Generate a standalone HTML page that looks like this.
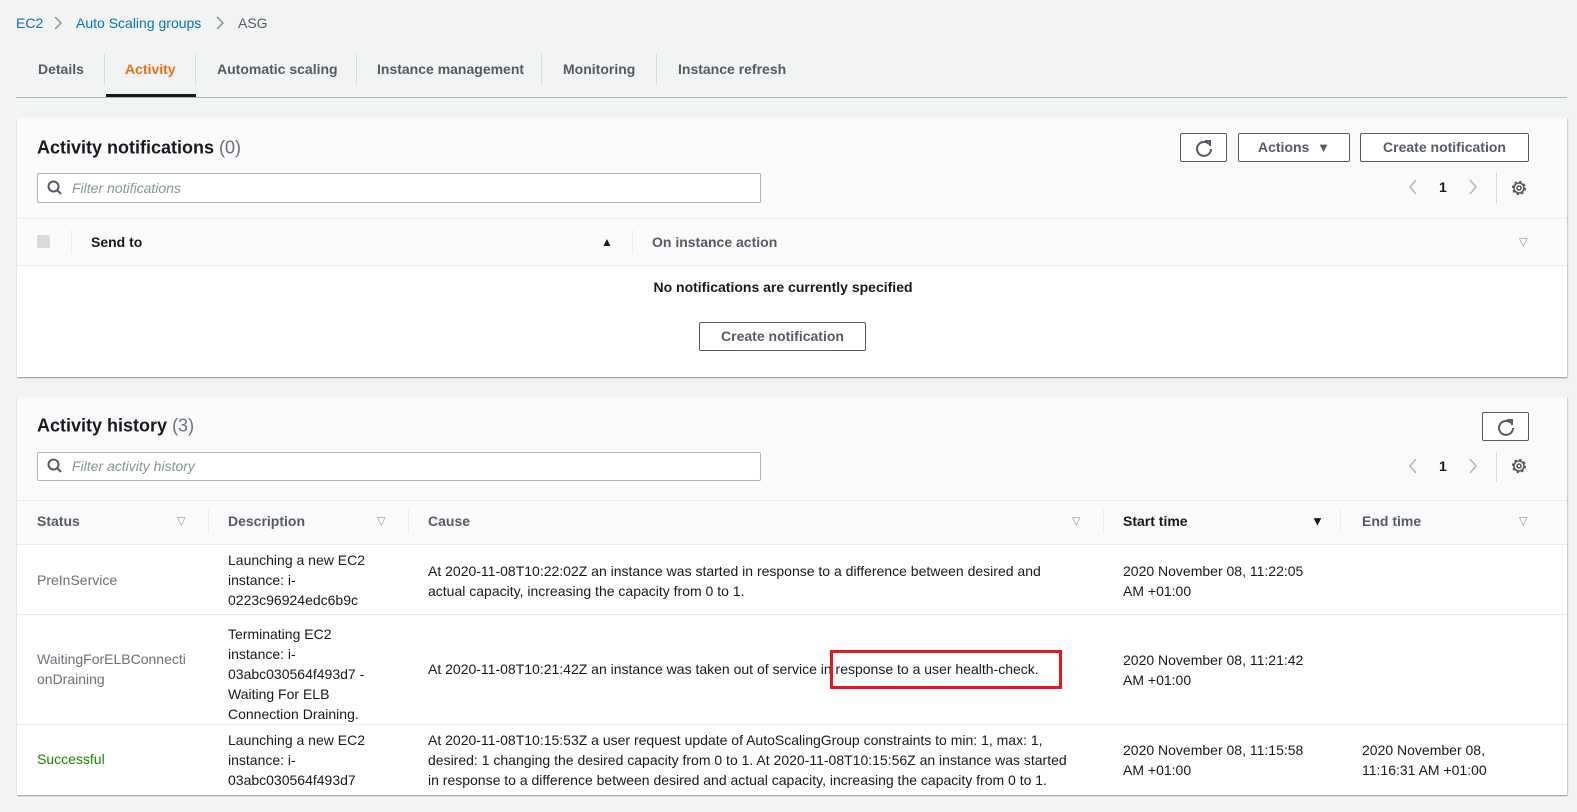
<!DOCTYPE html>
<html><head><meta charset="utf-8"><style>
*{margin:0;padding:0;box-sizing:border-box}
body{width:1577px;height:812px;background:#f2f3f3;font-family:"Liberation Sans",sans-serif;font-size:14px;color:#16191f;position:relative;overflow:hidden}
.a{position:absolute;white-space:nowrap}
.c{transform:translateY(-50%)}
.link{color:#0073bb}
.tab{font-weight:bold;color:#545b64;font-size:14px}
.sep{position:absolute;width:1px;background:#d5dbdb}
.panel{position:absolute;left:17px;width:1550px;background:#fff;box-shadow:0 1px 1px rgba(0,28,36,.3),1px 1px 1px rgba(0,28,36,.15)}
.btn{position:absolute;border:1px solid #545b64;border-radius:2px;background:#fff;font-weight:bold;color:#545b64;text-align:center;font-size:14px}
.inp{position:absolute;border:1px solid #aab7b8;border-radius:2px;background:#fff}
.ph{font-style:italic;color:#879596}
.h{font-weight:bold}
.tri{color:#879596;font-size:11px}
.lh{line-height:20px}
</style></head><body>
<div class="a c link" style="left:16px;top:23px">EC2</div>
<svg class="a" style="left:53px;top:16px" width="10" height="14"><path d="M2 1 L8 7 L2 13" fill="none" stroke="#879596" stroke-width="1.5"/></svg>
<div class="a c link" style="left:76px;top:23px">Auto Scaling groups</div>
<svg class="a" style="left:215px;top:16px" width="10" height="14"><path d="M2 1 L8 7 L2 13" fill="none" stroke="#879596" stroke-width="1.5"/></svg>
<div class="a c" style="left:238px;top:23px;color:#545b64">ASG</div>

<div class="a c tab" style="left:38px;top:69px">Details</div>
<div class="sep" style="left:104px;top:54px;height:30px"></div>
<div class="a c tab" style="left:125px;top:69px;color:#ec7211">Activity</div>
<div class="sep" style="left:195px;top:54px;height:30px"></div>
<div class="a c tab" style="left:217px;top:69px">Automatic scaling</div>
<div class="sep" style="left:356px;top:54px;height:30px"></div>
<div class="a c tab" style="left:377px;top:69px">Instance management</div>
<div class="sep" style="left:541px;top:54px;height:30px"></div>
<div class="a c tab" style="left:563px;top:69px">Monitoring</div>
<div class="sep" style="left:656px;top:54px;height:30px"></div>
<div class="a c tab" style="left:678px;top:69px">Instance refresh</div>
<div class="a" style="left:16px;top:97px;width:1551px;height:1px;background:#aab7b8"></div>
<div class="a" style="left:106px;top:94px;width:90px;height:3px;background:#16191f"></div>

<!-- panel 1 -->
<div class="panel" style="top:118px;height:259px">
 <div class="a" style="left:0;top:0;width:1550px;height:100px;background:#fafafa"></div>
 <div class="a c" style="left:20px;top:30px;font-size:18px"><b>Activity notifications</b> <span style="color:#687078">(0)</span></div>
 <div class="btn" style="left:1163px;top:15px;width:47px;height:29px"><svg width="20" height="20" style="margin-top:4px" viewBox="0 0 20 20"><path d="M15 6 A7 7 0 1 0 17 11" fill="none" stroke="#545b64" stroke-width="2"/><path d="M11 3 L16 3 L16 8" fill="none" stroke="#545b64" stroke-width="2"/></svg></div>
 <div class="btn" style="left:1221px;top:15px;width:112px;height:29px;line-height:27px">Actions &nbsp;<span style="font-size:13px">▼</span></div>
 <div class="btn" style="left:1343px;top:15px;width:169px;height:29px;line-height:27px">Create notification</div>
 <div class="inp" style="left:20px;top:55px;width:724px;height:30px"></div>
 <svg class="a" style="left:30px;top:62px" width="16" height="16"><circle cx="6.5" cy="6.5" r="5" fill="none" stroke="#545b64" stroke-width="2"/><path d="M10 10 L14 14" stroke="#545b64" stroke-width="2"/></svg>
 <div class="a c ph" style="left:55px;top:70px">Filter notifications</div>
 <svg class="a" style="left:1391px;top:61px" width="10" height="16"><path d="M8 1 L2 8 L8 15" fill="none" stroke="#aab7b8" stroke-width="1.5"/></svg>
 <div class="a c h" style="left:1422px;top:69px">1</div>
 <svg class="a" style="left:1451px;top:61px" width="10" height="16"><path d="M2 1 L8 8 L2 15" fill="none" stroke="#aab7b8" stroke-width="1.5"/></svg>
 <div class="sep" style="left:1479px;top:55px;height:30px"></div>
 <svg class="a" style="left:1493px;top:61px" width="18" height="18" viewBox="0 0 18 18"><circle cx="9" cy="9" r="6" fill="none" stroke="#545b64" stroke-width="2.2" stroke-dasharray="2.4 2.3"/><circle cx="9" cy="9" r="5" fill="none" stroke="#545b64" stroke-width="1.6"/><circle cx="9" cy="9" r="2" fill="none" stroke="#545b64" stroke-width="1.6"/></svg>
 <div class="a" style="left:0;top:100px;width:1550px;height:48px;background:#fafafa;border-top:1px solid #eaeded;border-bottom:1px solid #eaeded"></div>
 <div class="a" style="left:20px;top:117px;width:13px;height:13px;background:#d5dbdb;border-radius:2px"></div>
 <div class="sep" style="left:54px;top:112px;height:24px;background:#eaeded"></div>
 <div class="a c h" style="left:74px;top:124px">Send to</div>
 <div class="a c" style="left:584px;top:124px;font-size:12px">▲</div>
 <div class="sep" style="left:615px;top:112px;height:24px;background:#eaeded"></div>
 <div class="a c" style="left:635px;top:124px;font-weight:bold;color:#545b64">On instance action</div>
 <div class="a c tri" style="left:1502px;top:124px">▽</div>
 <div class="a c h" style="left:766px;top:169px;transform:translate(-50%,-50%);color:#16191f">No notifications are currently specified</div>
 <div class="btn" style="left:682px;top:204px;width:167px;height:29px;line-height:27px">Create notification</div>
</div>

<!-- panel 2 -->
<div class="panel" style="top:397px;height:398px">
 <div class="a" style="left:0;top:0;width:1550px;height:148px;background:#fafafa"></div>
 <div class="a c" style="left:20px;top:29px;font-size:18px"><b>Activity history</b> <span style="color:#687078">(3)</span></div>
 <div class="btn" style="left:1465px;top:15px;width:47px;height:29px"><svg width="20" height="20" style="margin-top:4px" viewBox="0 0 20 20"><path d="M15 6 A7 7 0 1 0 17 11" fill="none" stroke="#545b64" stroke-width="2"/><path d="M11 3 L16 3 L16 8" fill="none" stroke="#545b64" stroke-width="2"/></svg></div>
 <div class="inp" style="left:20px;top:55px;width:724px;height:29px"></div>
 <svg class="a" style="left:30px;top:61px" width="16" height="16"><circle cx="6.5" cy="6.5" r="5" fill="none" stroke="#545b64" stroke-width="2"/><path d="M10 10 L14 14" stroke="#545b64" stroke-width="2"/></svg>
 <div class="a c ph" style="left:55px;top:69px">Filter activity history</div>
 <svg class="a" style="left:1391px;top:61px" width="10" height="16"><path d="M8 1 L2 8 L8 15" fill="none" stroke="#aab7b8" stroke-width="1.5"/></svg>
 <div class="a c h" style="left:1422px;top:69px">1</div>
 <svg class="a" style="left:1451px;top:61px" width="10" height="16"><path d="M2 1 L8 8 L2 15" fill="none" stroke="#aab7b8" stroke-width="1.5"/></svg>
 <div class="sep" style="left:1479px;top:55px;height:30px"></div>
 <svg class="a" style="left:1493px;top:60px" width="18" height="18" viewBox="0 0 18 18"><circle cx="9" cy="9" r="6" fill="none" stroke="#545b64" stroke-width="2.2" stroke-dasharray="2.4 2.3"/><circle cx="9" cy="9" r="5" fill="none" stroke="#545b64" stroke-width="1.6"/><circle cx="9" cy="9" r="2" fill="none" stroke="#545b64" stroke-width="1.6"/></svg>
 <div class="a" style="left:0;top:103px;width:1550px;height:45px;border-top:1px solid #eaeded;border-bottom:1px solid #eaeded"></div>
 <div class="a c h" style="left:20px;top:124px;color:#545b64">Status</div>
 <div class="a c tri" style="left:160px;top:124px">▽</div>
 <div class="sep" style="left:191px;top:112px;height:24px;background:#eaeded"></div>
 <div class="a c h" style="left:211px;top:124px;color:#545b64">Description</div>
 <div class="a c tri" style="left:360px;top:124px">▽</div>
 <div class="sep" style="left:391px;top:112px;height:24px;background:#eaeded"></div>
 <div class="a c h" style="left:411px;top:124px;color:#545b64">Cause</div>
 <div class="a c tri" style="left:1055px;top:124px">▽</div>
 <div class="sep" style="left:1086px;top:112px;height:24px;background:#eaeded"></div>
 <div class="a c h" style="left:1106px;top:124px">Start time</div>
 <div class="a c" style="left:1294px;top:124px;font-size:13px">▼</div>
 <div class="sep" style="left:1323px;top:112px;height:24px;background:#eaeded"></div>
 <div class="a c h" style="left:1345px;top:124px;color:#545b64">End time</div>
 <div class="a c tri" style="left:1502px;top:124px">▽</div>

 <div class="a" style="left:0;top:217px;width:1550px;height:1px;background:#eaeded"></div>
 <div class="a" style="left:0;top:327px;width:1550px;height:1px;background:#eaeded"></div>

 <div class="a c" style="left:20px;top:183px;color:#687078">PreInService</div>
 <div class="a lh" style="left:211px;top:153px">Launching a new EC2<br>instance: i-<br>0223c96924edc6b9c</div>
 <div class="a lh" style="left:411px;top:164px">At 2020-11-08T10:22:02Z an instance was started in response to a difference between desired and<br>actual capacity, increasing the capacity from 0 to 1.</div>
 <div class="a lh" style="left:1106px;top:164px">2020 November 08, 11:22:05<br>AM +01:00</div>

 <div class="a lh" style="left:20px;top:252px;color:#687078">WaitingForELBConnecti<br>onDraining</div>
 <div class="a lh" style="left:211px;top:227px">Terminating EC2<br>instance: i-<br>03abc030564f493d7 -<br>Waiting For ELB<br>Connection Draining.</div>
 <div class="a c" style="left:411px;top:272px">At 2020-11-08T10:21:42Z an instance was taken out of service in response to a user health-check.</div>
 <div class="a" style="left:813px;top:253px;width:232px;height:39px;border:3px solid #e8141e"></div>
 <div class="a lh" style="left:1106px;top:253px">2020 November 08, 11:21:42<br>AM +01:00</div>

 <div class="a c" style="left:20px;top:362px;color:#1d8102">Successful</div>
 <div class="a lh" style="left:211px;top:333px">Launching a new EC2<br>instance: i-<br>03abc030564f493d7</div>
 <div class="a lh" style="left:411px;top:333px">At 2020-11-08T10:15:53Z a user request update of AutoScalingGroup constraints to min: 1, max: 1,<br>desired: 1 changing the desired capacity from 0 to 1. At 2020-11-08T10:15:56Z an instance was started<br>in response to a difference between desired and actual capacity, increasing the capacity from 0 to 1.</div>
 <div class="a lh" style="left:1106px;top:343px">2020 November 08, 11:15:58<br>AM +01:00</div>
 <div class="a lh" style="left:1345px;top:343px">2020 November 08,<br>11:16:31 AM +01:00</div>
</div>
</body></html>
